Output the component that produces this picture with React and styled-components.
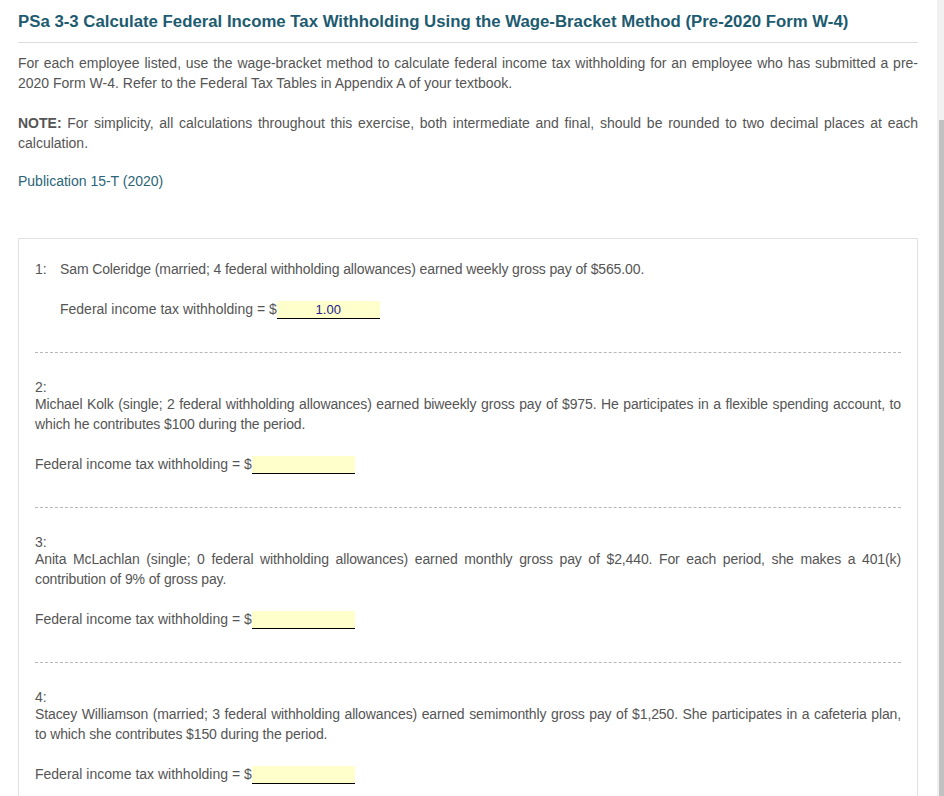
import React from 'react';
import styled, { createGlobalStyle } from 'styled-components';

const GlobalStyle = createGlobalStyle`
  html, body {
    margin: 0;
    padding: 0;
    background: #fff;
  }
  body {
    font-family: "Liberation Sans", Arial, sans-serif;
    font-size: 14px;
    color: #555;
  }
`;

const ITEMS = [
  {
    number: '1',
    inline: true,
    text: 'Sam Coleridge (married; 4 federal withholding allowances) earned weekly gross pay of $565.00.',
    value: '1.00',
  },
  {
    number: '2',
    text: 'Michael Kolk (single; 2 federal withholding allowances) earned biweekly gross pay of $975. He participates in a flexible spending account, to which he contributes $100 during the period.',
    value: '',
  },
  {
    number: '3',
    text: 'Anita McLachlan (single; 0 federal withholding allowances) earned monthly gross pay of $2,440. For each period, she makes a 401(k) contribution of 9% of gross pay.',
    value: '',
  },
  {
    number: '4',
    text: 'Stacey Williamson (married; 3 federal withholding allowances) earned semimonthly gross pay of $1,250. She participates in a cafeteria plan, to which she contributes $150 during the period.',
    value: '',
  },
];

const Page = styled.div`
  width: 900px;
  margin-left: 18px;
  padding-bottom: 40px;
`;

const Title = styled.h1`
  margin: 12px 0 0;
  padding-bottom: 10px;
  border-bottom: 1px solid #dcdcdc;
  font-size: 16.8px;
  line-height: 20px;
  font-weight: bold;
  color: #1d5b70;
`;

const Paragraph = styled.p`
  margin: ${p => p.$top || 0}px 0 0;
  line-height: 20px;
  text-align: justify;
`;

const Link = styled.a`
  display: block;
  margin-top: 18px;
  line-height: 20px;
  color: #2b6579;
  text-decoration: none;
`;

const Card = styled.div`
  margin-top: 47px;
  border: 1px solid #e2e2e2;
  padding: 0 16px;
`;

const Item = styled.div`
  padding: ${p => (p.$first ? 20 : 27)}px 0 33px;
  border-top: ${p => (p.$first ? 'none' : '1px dashed #b8b8b8')};
`;

const InlineRow = styled.div`
  display: flex;
  line-height: 20px;
`;

const Num = styled.div`
  width: ${p => (p.$inline ? '25px' : 'auto')};
  flex-shrink: 0;
  line-height: ${p => (p.$inline ? '20px' : '14px')};
`;

const Body = styled.div`
  flex: 1;
`;

const Text = styled.div`
  line-height: 20px;
  letter-spacing: -0.12px;
  text-align: justify;
`;

const FieldRow = styled.div`
  display: flex;
  align-items: center;
  height: 20px;
  margin-top: 20px;
`;

const Answer = styled.input`
  box-sizing: border-box;
  width: 103px;
  height: 18px;
  margin: 2px 0 0 0;
  padding: 0;
  border: none;
  border-bottom: 1px solid #000;
  background: #ffffcc;
  font-family: "Liberation Sans", Arial, sans-serif;
  font-size: 13px;
  color: #22228a;
  text-align: center;
  outline: none;
`;

const Scrollbar = styled.div`
  position: fixed;
  top: 0;
  right: 0;
  width: 7px;
  height: 100%;
  background: #f1f1f1;
`;

const Thumb = styled.div`
  position: absolute;
  top: 120px;
  right: 0;
  width: 5px;
  bottom: 0;
  background: #c1c1c1;
`;

const Field = ({ value }) => (
  <FieldRow>
    <span>Federal income tax withholding = $</span>
    <Answer defaultValue={value} />
  </FieldRow>
);

export default function App() {
  return (
    <>
      <GlobalStyle />
      <Page>
        <Title>PSa 3-3 Calculate Federal Income Tax Withholding Using the Wage-Bracket Method (Pre-2020 Form W-4)</Title>
        <Paragraph $top={10}>
          For each employee listed, use the wage-bracket method to calculate federal income tax withholding for an employee who has submitted a pre-2020 Form W-4. Refer to the Federal Tax Tables in Appendix A of your textbook.
        </Paragraph>
        <Paragraph $top={20}>
          <b>NOTE:</b> For simplicity, all calculations throughout this exercise, both intermediate and final, should be rounded to two decimal places at each calculation.
        </Paragraph>
        <Link href="#">Publication 15-T (2020)</Link>
        <Card>
          {ITEMS.map((item, i) =>
            item.inline ? (
              <Item key={item.number} $first={i === 0}>
                <InlineRow>
                  <Num $inline>{item.number}:</Num>
                  <Body>
                    <Text>{item.text}</Text>
                    <Field value={item.value} />
                  </Body>
                </InlineRow>
              </Item>
            ) : (
              <Item key={item.number} $first={i === 0}>
                <Num>{item.number}:</Num>
                <Text>{item.text}</Text>
                <Field value={item.value} />
              </Item>
            )
          )}
        </Card>
      </Page>
      <Scrollbar>
        <Thumb />
      </Scrollbar>
    </>
  );
}
